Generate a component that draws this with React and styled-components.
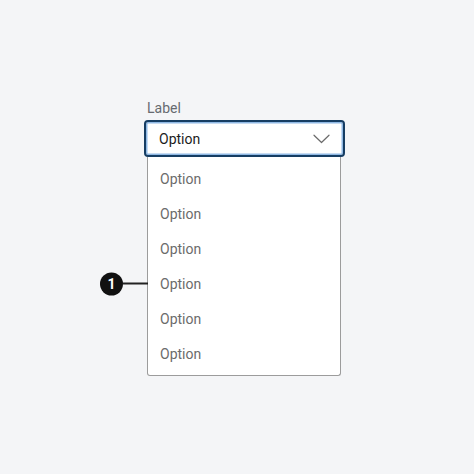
import React from "react";
import styled, { createGlobalStyle } from "styled-components";

const Global = createGlobalStyle`
  html, body { margin: 0; padding: 0; background: #f4f5f7; }
  body { font-family: Roboto, "Noto Sans", Arial, sans-serif; }
`;

const Page = styled.div`
  width: 474px;
  height: 474px;
  box-sizing: border-box;
  padding: 100px 0 0 144px;
  display: flex;
  flex-direction: column;
`;

const Field = styled.div`
  width: 201px;
  display: flex;
  flex-direction: column;
`;

const Label = styled.div`
  font-size: 14px;
  line-height: 17px;
  color: #666a70;
  padding-left: 3px;
  margin-bottom: 3px;
`;

const Select = styled.div`
  height: 37px;
  box-sizing: border-box;
  border: 2px solid #163d63;
  border-radius: 4px;
  background: #fff;
  box-shadow: inset 0 0 0 1.5px #8fb8e4;
  display: flex;
  align-items: center;
  justify-content: space-between;
  padding: 0 13px 0 13px;
  font-size: 14px;
  color: #1c1c1c;
`;

const List = styled.div`
  width: 194px;
  margin-left: 3px;
  box-sizing: border-box;
  border: 1px solid #9c9c9c;
  border-top: none;
  border-radius: 0 0 3px 3px;
  background: #fff;
  padding: 4px 0;
  display: flex;
  flex-direction: column;
`;

const Item = styled.div`
  position: relative;
  height: 35px;
  display: flex;
  align-items: center;
  padding-left: 12px;
  font-size: 14px;
  color: #6b6b6b;
`;

const Marker = styled.div`
  position: absolute;
  right: 100%;
  top: 50%;
  transform: translateY(-50%);
  display: flex;
  align-items: center;
`;

const Badge = styled.div`
  width: 23px;
  height: 23px;
  border-radius: 50%;
  background: #111;
  color: #fff;
  font-size: 14px;
  font-weight: 700;
  display: flex;
  align-items: center;
  justify-content: center;
`;

const Leader = styled.div`
  width: 25px;
  height: 1.5px;
  background: #222;
`;

const Chevron = () => (
  <svg width="17" height="10" viewBox="0 0 17 10" fill="none">
    <path d="M1 1.2 L8.5 8.5 L16 1.2" stroke="#6a6a6a" strokeWidth="1.2" strokeLinecap="round" strokeLinejoin="round" />
  </svg>
);

export default function App() {
  const options = ["Option", "Option", "Option", "Option", "Option", "Option"];
  return (
    <>
      <Global />
      <Page>
        <Field>
          <Label>Label</Label>
          <Select>
            <span>Option</span>
            <Chevron />
          </Select>
          <List>
            {options.map((o, i) => (
              <Item key={i}>
                {i === 3 && (
                  <Marker>
                    <Badge>1</Badge>
                    <Leader />
                  </Marker>
                )}
                {o}
              </Item>
            ))}
          </List>
        </Field>
      </Page>
    </>
  );
}
